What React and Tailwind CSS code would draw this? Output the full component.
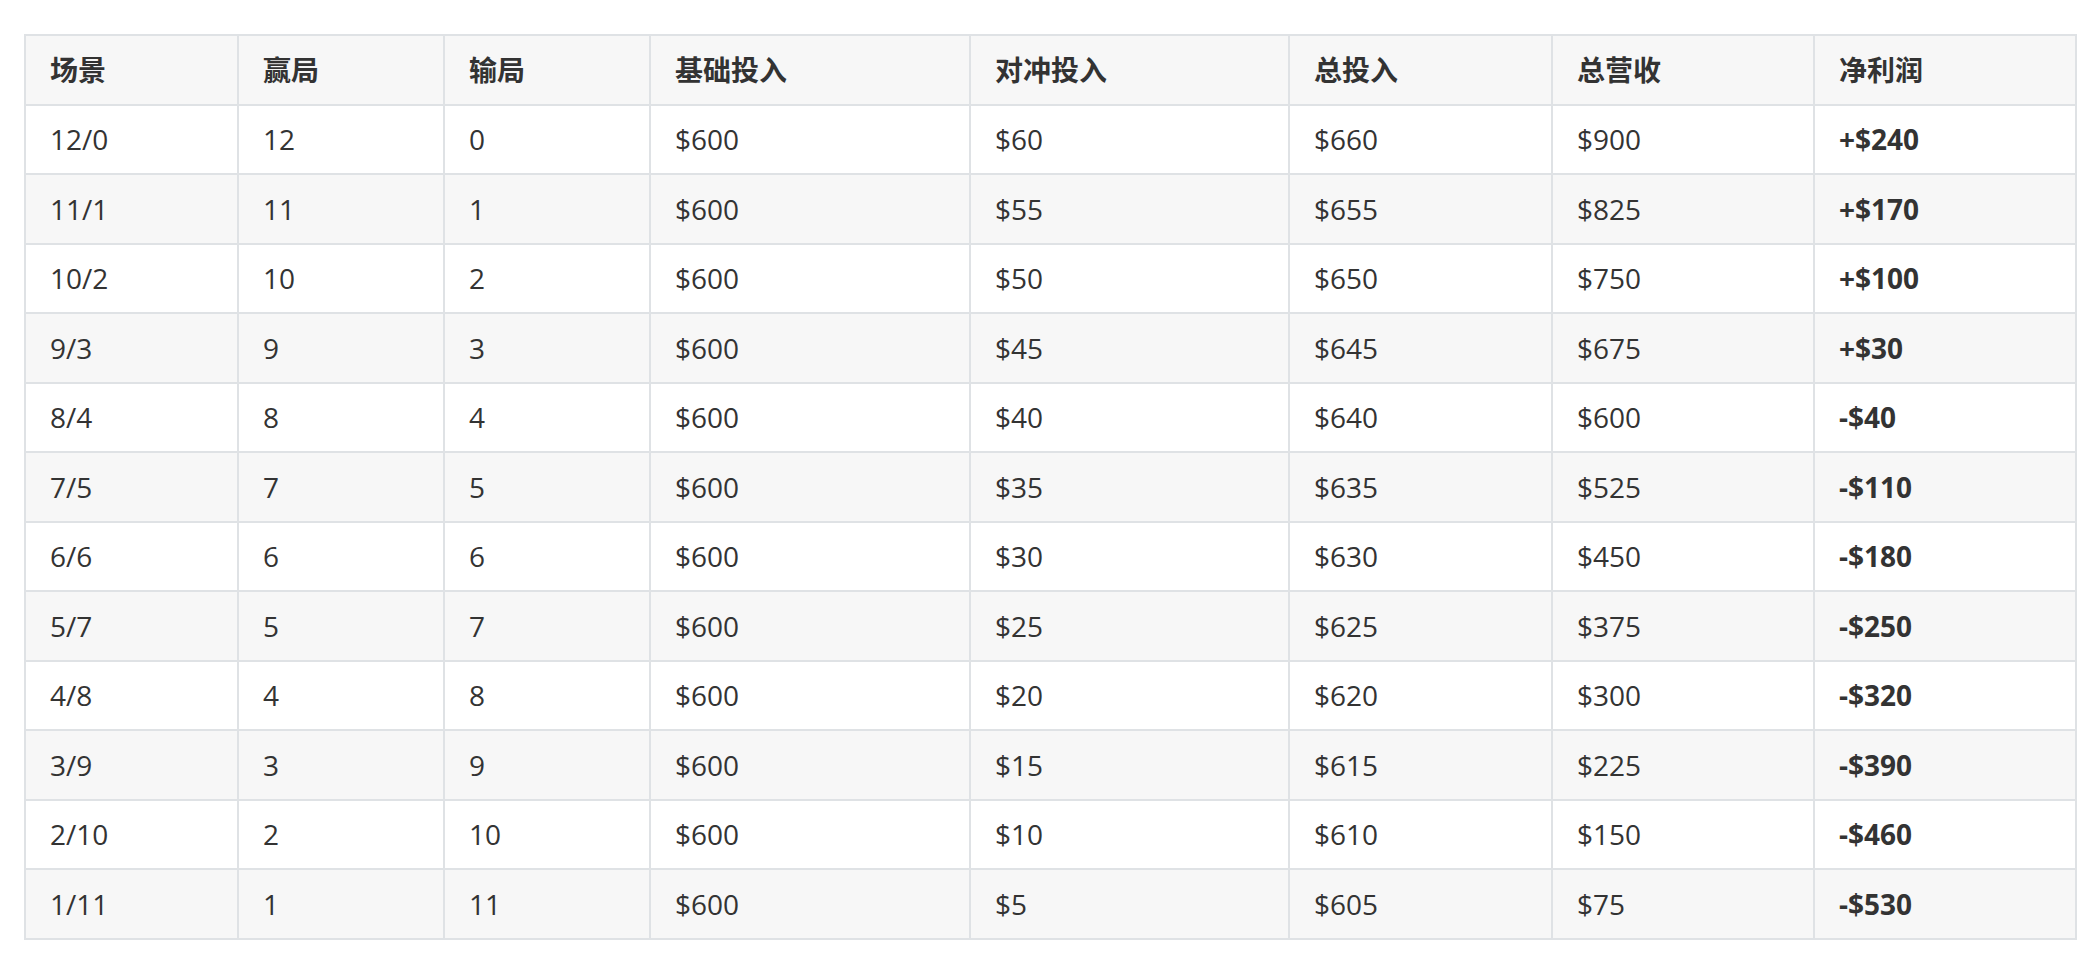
import React from 'react';

const rows = [
  ['12/0', '12', '0', '$600', '$60', '$660', '$900', '+$240'],
  ['11/1', '11', '1', '$600', '$55', '$655', '$825', '+$170'],
  ['10/2', '10', '2', '$600', '$50', '$650', '$750', '+$100'],
  ['9/3', '9', '3', '$600', '$45', '$645', '$675', '+$30'],
  ['8/4', '8', '4', '$600', '$40', '$640', '$600', '-$40'],
  ['7/5', '7', '5', '$600', '$35', '$635', '$525', '-$110'],
  ['6/6', '6', '6', '$600', '$30', '$630', '$450', '-$180'],
  ['5/7', '5', '7', '$600', '$25', '$625', '$375', '-$250'],
  ['4/8', '4', '8', '$600', '$20', '$620', '$300', '-$320'],
  ['3/9', '3', '9', '$600', '$15', '$615', '$225', '-$390'],
  ['2/10', '2', '10', '$600', '$10', '$610', '$150', '-$460'],
  ['1/11', '1', '11', '$600', '$5', '$605', '$75', '-$530'],
];

const headers = ['场景', '赢局', '输局', '基础投入', '对冲投入', '总投入', '总营收', '净利润'];
const widths = ['w-[213px]', 'w-[206px]', 'w-[206px]', 'w-[320px]', 'w-[319px]', 'w-[263px]', 'w-[262px]', 'w-[262px]'];

export default function App() {
  return (
    <div className="min-h-screen bg-white pl-[24px] pt-[34px] font-['Open_Sans','Noto_Sans_CJK_SC',sans-serif] text-[28px] text-[#333333]">
      <table className="w-[2052px] table-fixed border-collapse">
        <colgroup>
          {widths.map((w, i) => (
            <col key={i} className={w} />
          ))}
        </colgroup>
        <thead>
          <tr className="h-[69.5px] bg-[#f7f7f7]">
            {headers.map((h) => (
              <th key={h} className="border-2 border-[#dfe2e5] px-[24px] py-0 text-left font-bold leading-[42px]">
                {h}
              </th>
            ))}
          </tr>
        </thead>
        <tbody>
          {rows.map((r, i) => (
            <tr key={r[0]} className={`h-[69.5px] ${i % 2 === 1 ? 'bg-[#f7f7f7]' : 'bg-white'}`}>
              {r.map((c, j) => (
                <td
                  key={j}
                  className={`border-2 border-[#dfe2e5] px-[24px] py-0 leading-[42px] ${j === 7 ? 'font-bold' : ''}`}
                >
                  {c}
                </td>
              ))}
            </tr>
          ))}
        </tbody>
      </table>
    </div>
  );
}
